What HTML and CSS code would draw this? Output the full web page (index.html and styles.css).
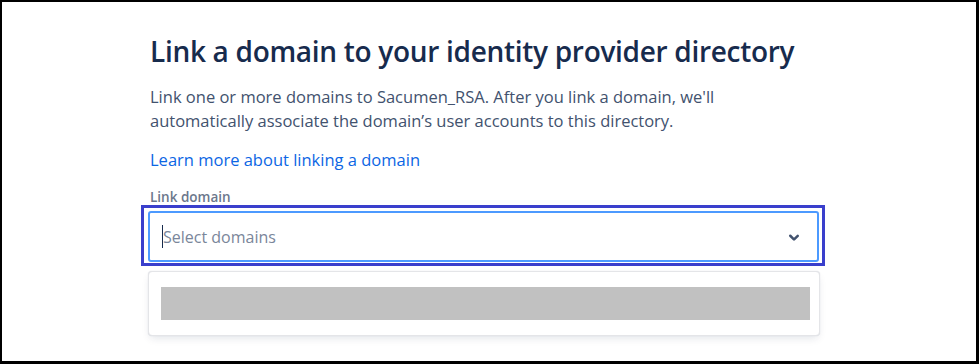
FILE: index.html
```html
<!DOCTYPE html>
<html lang="en">
<head>
<meta charset="utf-8">
<title>Link a domain</title>
<link rel="stylesheet" href="styles.css">
</head>
<body>
<div class="frame">
  <div class="content">
    <h1 class="title">Link a domain to your identity provider directory</h1>
    <p class="desc">Link one or more domains to Sacumen_RSA. After you link a domain, we'll<br>automatically associate the domain’s user accounts to this directory.</p>
    <a class="learn" href="#">Learn more about linking a domain</a>
    <div class="label">Link domain</div>
    <div class="focus-ring">
      <div class="select">
        <div class="value">
          <span class="caret"></span><span class="placeholder">Select domains</span>
        </div>
        <svg class="chevron" width="30" height="30" viewBox="0 0 24 24" aria-hidden="true"><path fill="currentColor" d="M8.292 10.293a1.009 1.009 0 0 0 0 1.419l2.939 2.965c.218.215.5.322.779.322s.556-.107.769-.322l2.93-2.955a1.01 1.01 0 0 0 0-1.419.987.987 0 0 0-1.406 0l-2.298 2.317-2.307-2.327a.99.99 0 0 0-1.406 0z"/></svg>
      </div>
    </div>
    <div class="menu">
      <div class="menu-bar"></div>
    </div>
  </div>
</div>
</body>
</html>
```
FILE: styles.css
```css
html, body {
  margin: 0;
  padding: 0;
  background: #ffffff;
}
body {
  font-family: "Open Sans", "Noto Sans", sans-serif;
  color: #172B4D;
}
.frame {
  box-sizing: border-box;
  width: 979px;
  height: 364px;
  border-style: solid;
  border-color: #000000;
  border-width: 2px 3px 3px 2px;
  padding: 33px 0 0 146px;
  overflow: hidden;
}
.content {
  width: 671px;
  display: flex;
  flex-direction: column;
  align-items: flex-start;
}
.title {
  margin: 0;
  font-size: 28px;
  line-height: 32px;
  font-weight: 600;
  letter-spacing: -0.3px;
  color: #172B4D;
  padding-left: 2px;
  white-space: nowrap;
}
.desc {
  margin: 18px 0 0;
  font-size: 16.5px;
  line-height: 24px;
  color: #42526E;
  padding-left: 2px;
  white-space: nowrap;
}
.learn {
  margin-top: 15px;
  font-size: 16.5px;
  line-height: 24px;
  color: #0C66E4;
  text-decoration: none;
  padding-left: 2px;
}
.label {
  margin-top: 17px;
  font-size: 13.5px;
  line-height: 16px;
  font-weight: 600;
  color: #6B778C;
  padding-left: 2px;
}
.focus-ring {
  margin-left: -7px;
  border: 3px solid #3A3FCC;
  padding: 3px 3px 1px 4px;
}
.select {
  box-sizing: border-box;
  width: 671px;
  height: 51px;
  border: 2px solid #4C9AFF;
  border-radius: 3px;
  display: flex;
  align-items: center;
  padding: 0 8px 0 12px;
  background: #ffffff;
}
.value {
  flex: 1;
  display: flex;
  align-items: center;
}
.caret {
  flex: none;
  height: 23px;
  width: 0;
  border-left: 1px solid #172B4D;
}
.placeholder {
  font-size: 16px;
  line-height: 20px;
  color: #7A869A;
}
.chevron {
  color: #42526E;
  flex: none;
  display: block;
}
.menu {
  box-sizing: border-box;
  margin-top: 5px;
  width: 672px;
  height: 65px;
  border: 1px solid #E4E5E8;
  border-radius: 4px;
  box-shadow: 0 4px 8px -2px rgba(9, 30, 66, 0.12), 0 0 1px rgba(9, 30, 66, 0.18);
  padding: 15px 9px 14px 12px;
  background: #ffffff;
}
.menu-bar {
  height: 33px;
  background: #C1C1C1;
}
```
